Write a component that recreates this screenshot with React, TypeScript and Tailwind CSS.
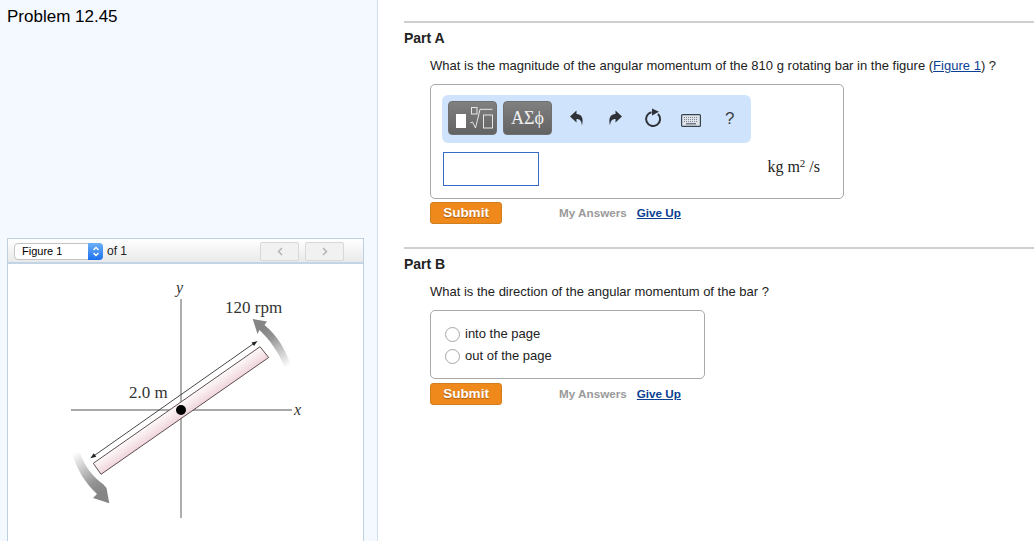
const sans = { fontFamily: '"Liberation Sans", Arial, sans-serif' };

function FigureDrawing() {
  return (
    <svg width="356" height="277" viewBox="8 264 356 277" className="block">
      <defs>
        <linearGradient id="barFill" gradientUnits="userSpaceOnUse" x1="177.3" y1="405" x2="184.7" y2="415.6">
          <stop offset="0" stopColor="#fdf8f8" />
          <stop offset="1" stopColor="#f0d6dc" />
        </linearGradient>
        <linearGradient id="arrowTop" gradientUnits="userSpaceOnUse" x1="289" y1="366" x2="265" y2="328">
          <stop offset="0" stopColor="#ffffff" />
          <stop offset="0.75" stopColor="#939393" />
          <stop offset="1" stopColor="#858585" />
        </linearGradient>
        <linearGradient id="arrowBottom" gradientUnits="userSpaceOnUse" x1="74" y1="453" x2="100" y2="493">
          <stop offset="0" stopColor="#ffffff" />
          <stop offset="0.75" stopColor="#939393" />
          <stop offset="1" stopColor="#858585" />
        </linearGradient>
      </defs>
      <path d="M181 299V518" stroke="#8c8c8c" strokeWidth="1.4" />
      <path d="M71 410H292" stroke="#8c8c8c" strokeWidth="1.4" />
      <path d="M260 346.7L268.7 357.5L101 474.3L93.3 463.3Z" fill="url(#barFill)" stroke="#4a3a3c" strokeWidth="0.9" />
      <path d="M255 342.6L92.5 456.8" stroke="#333" strokeWidth="0.9" />
      <path d="M257.5 341L251.5 342.5L254 346Z" fill="#222" />
      <path d="M90.3 458.3L96.3 456.8L93.8 453.3Z" fill="#222" />
      <circle cx="181" cy="410" r="5" fill="#000" />
      <path d="M252.7 319L267 321.5L264.5 325C277 335 286 350 291 366L284 366C279 353 270 340 259.5 330L257.5 334Z" fill="url(#arrowTop)" />
      <path d="M109.3 503.3L93 498L97 494C86 484 77 470 72 453L80 453C85 467 94 478 103 484L106.5 488Z" fill="url(#arrowBottom)" />
      <g style={{ fontFamily: '"Liberation Serif", "Times New Roman", serif' }} fill="#333">
        <text x="225" y="313" fontSize="17">120 rpm</text>
        <text x="129" y="398" fontSize="17">2.0 m</text>
        <text x="176" y="293" fontSize="16" fontStyle="italic">y</text>
        <text x="294" y="415" fontSize="16" fontStyle="italic">x</text>
      </g>
    </svg>
  );
}

function FigurePanel() {
  return (
    <div className="ml-[7px] mt-[212px] flex h-[304px] w-[357px] flex-col overflow-hidden border-x border-t border-[#bdd0e2] bg-white">
      <div className="flex h-[25px] shrink-0 items-center border-b-2 border-[#c3d4e4] bg-gradient-to-b from-white to-[#e9e9e9] pl-[6px] pr-[19px] pt-px">
        <div className="flex h-[17px] w-[89px] items-center justify-between rounded-[4px] border border-[#c4c4c4] bg-white pl-[7px] text-[11px] text-black">
          <span>Figure 1</span>
          <span className="-mr-px flex h-[17px] w-[15px] items-center justify-center rounded-r-[4px] bg-gradient-to-b from-[#6cb0f8] to-[#1a6ff0]">
            <svg width="8" height="11" viewBox="0 0 8 11" fill="none" stroke="#fff" strokeWidth="1.4">
              <path d="M1.5 4L4 1.5L6.5 4" />
              <path d="M1.5 7L4 9.5L6.5 7" />
            </svg>
          </span>
        </div>
        <span className="ml-[4px] text-[12px] text-[#222]">of 1</span>
        <div className="ml-auto flex gap-[6px]">
          <button className="flex h-[19px] w-[39px] items-center justify-center rounded-[2px] border border-[#d8d8d8] bg-[#f1f1f1]">
            <svg width="6" height="9" viewBox="0 0 6 9" fill="none" stroke="#b4b4b4" strokeWidth="1.5">
              <path d="M5 1L1.5 4.5L5 8" />
            </svg>
          </button>
          <button className="flex h-[19px] w-[39px] items-center justify-center rounded-[2px] border border-[#d8d8d8] bg-[#f1f1f1]">
            <svg width="6" height="9" viewBox="0 0 6 9" fill="none" stroke="#b4b4b4" strokeWidth="1.5">
              <path d="M1 1L4.5 4.5L1 8" />
            </svg>
          </button>
        </div>
      </div>
      <FigureDrawing />
    </div>
  );
}

function SubmitRow() {
  return (
    <div className="flex items-center">
      <button className="h-[22px] w-[72px] rounded-[3px] border border-[#d07f1e] bg-[#f0891c] text-[13.5px] font-bold leading-[18px] text-white [text-shadow:0_1px_1px_rgba(120,60,0,0.6)]">
        Submit
      </button>
      <span className="ml-[57px] text-[11.7px] font-bold text-[#9a9a9a]">My Answers</span>
      <a className="ml-[10px] text-[11.7px] font-bold text-[#0b3f92] underline">Give Up</a>
    </div>
  );
}

function ToolbarIcons() {
  return (
    <>
      <svg width="14" height="16" viewBox="0 0 14 16" className="-mt-[3px] ml-[18px]" fill="#2e3238">
        <path d="M0 6.5L6.5 0.5V4C11 4 14 7.5 12 15.5C11.5 11 10 9 6.5 9V12.5Z" />
      </svg>
      <svg width="14" height="16" viewBox="0 0 14 16" className="-mt-[3px] ml-[24px]" fill="#2e3238">
        <path d="M14 6.5L7.5 0.5V4C3 4 0 7.5 2 15.5C2.5 11 4 9 7.5 9V12.5Z" />
      </svg>
      <svg width="18" height="20" viewBox="0 0 18 20" className="-mt-[2px] ml-[22px]" fill="none" stroke="#2e3238" strokeWidth="2">
        <path d="M7.5 4.2A7 7 0 1 0 14 6" />
        <path d="M8 0.5L15 3.8L8 7.5Z" fill="#2e3238" stroke="none" />
      </svg>
      <svg width="20" height="13" viewBox="0 0 20 13" className="ml-[19px] mt-[2px]">
        <rect x="0.6" y="0.6" width="18.8" height="11.8" rx="1" fill="#dfe4ea" stroke="#37434f" strokeWidth="1.2" />
        <path d="M3 3.5H17M3 5.5H17M3 7.5H17" stroke="#7b8591" strokeWidth="1" strokeDasharray="1 1" />
        <path d="M5 9.8H15" stroke="#55606c" strokeWidth="1.2" />
      </svg>
      <span className="-mt-[2px] ml-[24px] text-[17px] leading-none text-[#3a4048]">?</span>
    </>
  );
}

function PartA() {
  return (
    <section>
      <div className="h-[2px] bg-[#cfcfcf]" />
      <h2 className="mt-[7px] text-[14px] font-bold leading-[16px] text-[#222]">Part A</h2>
      <div className="ml-[26px] mt-[12px] w-[580px]">
        <p className="text-[13px] leading-[15px] tracking-[0.01px] text-[#222]">
          What is the magnitude of the angular momentum of the 810 g rotating bar in the figure (
          <a className="text-[#0b3f92] underline">Figure 1</a>) ?
        </p>
        <div className="mt-[11px] h-[115px] w-[414px] rounded-[5px] border border-[#a9a9a9] pl-[11px] pt-[10px]">
          <div className="flex h-[48px] w-[309px] items-center rounded-[6px] bg-[#cfe4fc] pl-[6px]">
            <div className="-mt-[2px] flex h-[34px] w-[49px] items-end rounded-[4px] border border-[#6f6f6f] bg-gradient-to-b from-[#808080] to-[#636363] pb-[5px] pl-[7px]">
              <span className="mb-px h-[14px] w-[10px] bg-white" />
              <svg width="24" height="22" viewBox="0 0 24 22" className="ml-[3px]" fill="none" stroke="#e6e6e6" strokeWidth="1">
                <rect x="2.5" y="0.5" width="5.5" height="6.5" />
                <path d="M1.3 16L3.5 15L6.5 21L11 2.3H23.5" />
                <rect x="14.5" y="8" width="9" height="13" />
              </svg>
            </div>
            <div
              className="-mt-[2px] ml-[6px] flex h-[34px] w-[49px] items-center justify-center rounded-[4px] border border-[#6f6f6f] bg-gradient-to-b from-[#808080] to-[#636363] text-[18px] text-[#f0f0f0]"
              style={{ fontFamily: '"Liberation Serif", serif' }}
            >
              ΑΣϕ
            </div>
            <ToolbarIcons />
          </div>
          <div className="mt-[9px] flex items-start justify-between pl-px pr-[23px]">
            <div className="h-[34px] w-[96px] border border-[#3a6bc4] bg-white" />
            <span className="mt-[5px] text-[16px] leading-[20px] text-[#222]" style={{ fontFamily: '"Liberation Serif", serif' }}>
              kg m<sup className="text-[11px]">2</sup> /s
            </span>
          </div>
        </div>
        <div className="mt-[3px]">
          <SubmitRow />
        </div>
      </div>
    </section>
  );
}

function RadioOption({ label }: { label: string }) {
  return (
    <label className="flex h-[22px] items-center gap-[5px] text-[13px] text-[#222]">
      <span className="h-[15px] w-[15px] rounded-full border border-[#a6a6a6] bg-white" />
      {label}
    </label>
  );
}

function PartB() {
  return (
    <section className="mt-[23px]">
      <div className="h-[2px] bg-[#cfcfcf]" />
      <h2 className="mt-[7px] text-[14px] font-bold leading-[16px] text-[#222]">Part B</h2>
      <div className="ml-[26px] mt-[12px]">
        <p className="text-[13px] leading-[15px] text-[#222]">
          What is the direction of the angular momentum of the bar ?
        </p>
        <div className="mt-[11px] h-[69px] w-[275px] rounded-[5px] border border-[#a9a9a9] pl-[14px] pt-[12px]">
          <RadioOption label="into the page" />
          <RadioOption label="out of the page" />
        </div>
        <div className="mt-[4px]">
          <SubmitRow />
        </div>
      </div>
    </section>
  );
}

export default function App() {
  return (
    <div className="flex h-[541px] w-[1034px] overflow-hidden bg-white" style={sans}>
      <aside className="w-[378px] shrink-0 border-r border-[#d3dfec] bg-[#f4f8ff]">
        <h1 className="pl-[7px] pt-[8px] text-[17px] leading-[18px] text-black">Problem 12.45</h1>
        <FigurePanel />
      </aside>
      <main className="flex-1 pl-[26px] pt-[21px]">
        <PartA />
        <PartB />
      </main>
    </div>
  );
}
